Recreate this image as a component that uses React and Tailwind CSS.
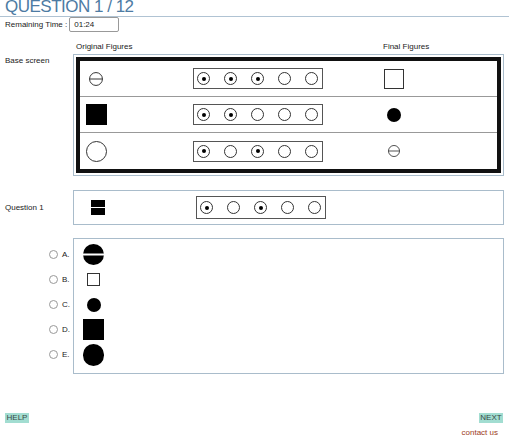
import React from "react";

function Theta({ size }) {
  return (
    <svg width={size} height={size} viewBox="0 0 20 20">
      <circle cx="10" cy="10" r="9.2" fill="white" stroke="#222" strokeWidth="1.3" />
      <line x1="1" y1="10" x2="19" y2="10" stroke="#222" strokeWidth="1.3" />
    </svg>
  );
}

function SplitDisc() {
  return (
    <svg width="21" height="21" viewBox="0 0 21 21">
      <circle cx="10.5" cy="10.5" r="10.5" fill="black" />
      <rect x="0" y="9.5" width="21" height="2" fill="white" />
    </svg>
  );
}

function Sequence({ dots, className }) {
  return (
    <div className={`flex items-center gap-[14px] pl-[3px] border border-[#555] bg-white ${className}`}>
      {dots.map((on, i) => (
        <div key={i} className="w-[13px] h-[13px] rounded-full border border-[#333] flex items-center justify-center">
          {on && <div className="w-[4px] h-[4px] rounded-full bg-black" />}
        </div>
      ))}
    </div>
  );
}

const baseRows = [
  {
    left: <Theta size={14} />,
    dots: [true, true, true, false, false],
    right: <div className="w-[20px] h-[20px] border border-[#333]" />
  },
  {
    left: <div className="w-[21px] h-[21px] bg-black" />,
    dots: [true, true, false, false, false],
    right: <div className="w-[14px] h-[14px] rounded-full bg-black" />
  },
  {
    left: <div className="w-[21px] h-[21px] rounded-full border border-[#333]" />,
    dots: [true, false, true, false, false],
    right: <Theta size={12} />
  }
];

const answers = [
  { label: "A.", fig: <SplitDisc /> },
  { label: "B.", fig: <div className="w-[13px] h-[13px] border border-[#333]" /> },
  { label: "C.", fig: <div className="w-[14px] h-[14px] rounded-full bg-black" /> },
  { label: "D.", fig: <div className="w-[21px] h-[21px] bg-black" /> },
  { label: "E.", fig: <div className="w-[22px] h-[22px] rounded-full bg-black" /> }
];

export default function App() {
  return (
    <div className="w-[509px] h-[444px] bg-white text-[#222] overflow-hidden" style={{ fontFamily: '"Liberation Sans", Arial, sans-serif' }}>
      <div className="h-[17px] border-b border-[#b0c3d3] overflow-hidden">
        <div className="pl-[5px] text-[17px] leading-[14px] tracking-[-0.5px] text-[#4d7ba3]">QUESTION 1 / 12</div>
      </div>

      <div className="flex items-center h-[15px] pl-[5px] text-[8px]">
        <span>Remaining Time :</span>
        <div className="ml-[2px] w-[50px] h-[15px] border border-[#999] rounded-[2px] pl-[4px] flex items-center">01:24</div>
      </div>

      <div className="mt-[10px] flex h-[10px] leading-[10px] text-[8px] pl-[76px]">
        <span className="w-[307px]">Original Figures</span>
        <span>Final Figures</span>
      </div>

      {/* base screen */}
      <div className="mt-[2px] flex">
        <div className="w-[73px] pl-[5px] pt-[2px] text-[8px] leading-[10px]">Base screen</div>
        <div className="w-[431px] border border-[#a9bccb] p-[2px]">
          <div className="border-4 border-[#111]">
            {baseRows.map((r, i) => (
              <div key={i} className={`h-[36px] flex items-center pl-[5px] ${i < 2 ? "border-b border-[#999]" : ""}`}>
                <div className="w-[22px] flex justify-center">{r.left}</div>
                <Sequence dots={r.dots} className="ml-[86px] w-[130px] h-[21px]" />
                <div className="ml-[60px] w-[21px] flex justify-center">{r.right}</div>
              </div>
            ))}
          </div>
        </div>
      </div>

      {/* question */}
      <div className="mt-[14px] flex">
        <div className="w-[73px] pl-[5px] flex items-center text-[8px]">Question 1</div>
        <div className="w-[431px] h-[35px] border border-[#a9bccb] flex items-center">
          <div className="ml-[17px] w-[14px] h-[15px] flex flex-col justify-between">
            <div className="h-[7px] bg-black" />
            <div className="h-[7px] bg-black" />
          </div>
          <Sequence dots={[true, false, true, false, false]} className="ml-[91px] w-[130px] h-[23px]" />
        </div>
      </div>

      {/* answers */}
      <div className="mt-[13px] flex">
        <div className="w-[73px] pt-[4px]">
          {answers.map((a) => (
            <div key={a.label} className="h-[25px] flex items-center pl-[49px] text-[8px]">
              <div className="w-[9px] h-[9px] rounded-full border border-[#999]" />
              <span className="ml-[4px]">{a.label}</span>
            </div>
          ))}
        </div>
        <div className="w-[431px] h-[136px] border border-[#a9bccb] pt-[3px]">
          {answers.map((a) => (
            <div key={a.label} className="h-[25px] flex items-center pl-[9px]">
              <div className="w-[21px] flex justify-center">{a.fig}</div>
            </div>
          ))}
        </div>
      </div>

      <div className="mt-[39px] flex justify-between pl-[5px] pr-[6px]">
        <div className="w-[24px] h-[10px] bg-[#a2ddd1] text-[#3a4a47] text-[8px] leading-[10px] flex justify-center">HELP</div>
        <div className="w-[24px] h-[10px] bg-[#a2ddd1] text-[#3a4a47] text-[8px] leading-[10px] flex justify-center">NEXT</div>
      </div>
      <div className="mt-[5px] flex justify-end pr-[11px] text-[8px] leading-[10px] text-[#9c3b22]">contact us</div>
    </div>
  );
}
